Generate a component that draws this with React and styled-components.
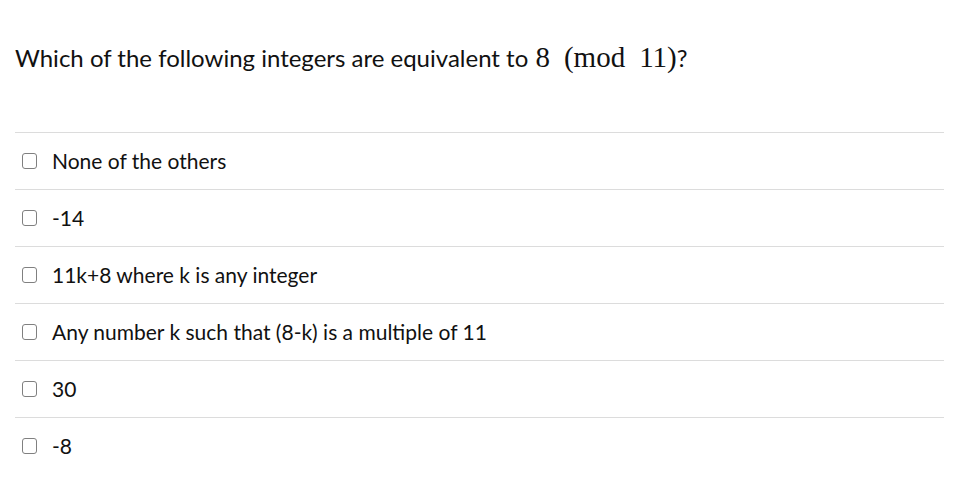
import React from 'react';
import styled, { createGlobalStyle } from 'styled-components';

const Global = createGlobalStyle`
  body {
    margin: 0;
    background: #fff;
    font-family: Lato, "Liberation Sans", sans-serif;
    color: #000;
  }
`;

const Wrap = styled.div`
  padding: 0 22px 0 15px;
`;

const Question = styled.div`
  height: 132px;
  box-sizing: border-box;
  padding-top: 41px;
  font-size: 24px;
  line-height: 32px;
  color: #111;
`;

const Math = styled.span`
  font-family: "Liberation Serif", "DejaVu Serif", serif;
  font-size: 29px;
  margin-left: 1px;
`;

const MathGap = styled.span`
  display: inline-block;
  width: ${p => p.w}px;
`;

const List = styled.div`
  border-top: 1px solid #dcdcdc;
`;

const Option = styled.label`
  height: 57px;
  box-sizing: border-box;
  padding-bottom: 2px;
  display: flex;
  align-items: center;
  border-bottom: 1px solid ${p => (p.last ? 'transparent' : '#dcdcdc')};
  font-size: 21px;
  color: #111;
`;

const Box = styled.span`
  width: 13px;
  height: 14px;
  border: 1.5px solid #808080;
  border-radius: 3px;
  margin: 2px 15px 0 7px;
  flex-shrink: 0;
`;

const options = [
  'None of the others',
  '-14',
  '11k+8 where k is any integer',
  'Any number k such that (8-k) is a multiple of 11',
  '30',
  '-8',
];

export default function App() {
  return (
    <>
      <Global />
      <Wrap>
        <Question>
          Which of the following integers are equivalent to{' '}
          <Math>
            8<MathGap w={14} />(mod<MathGap w={14} />11)
          </Math>
          ?
        </Question>
        <List>
          {options.map((o, i) => (
            <Option key={i} last={i === options.length - 1}>
              <Box />
              {o}
            </Option>
          ))}
        </List>
      </Wrap>
    </>
  );
}
